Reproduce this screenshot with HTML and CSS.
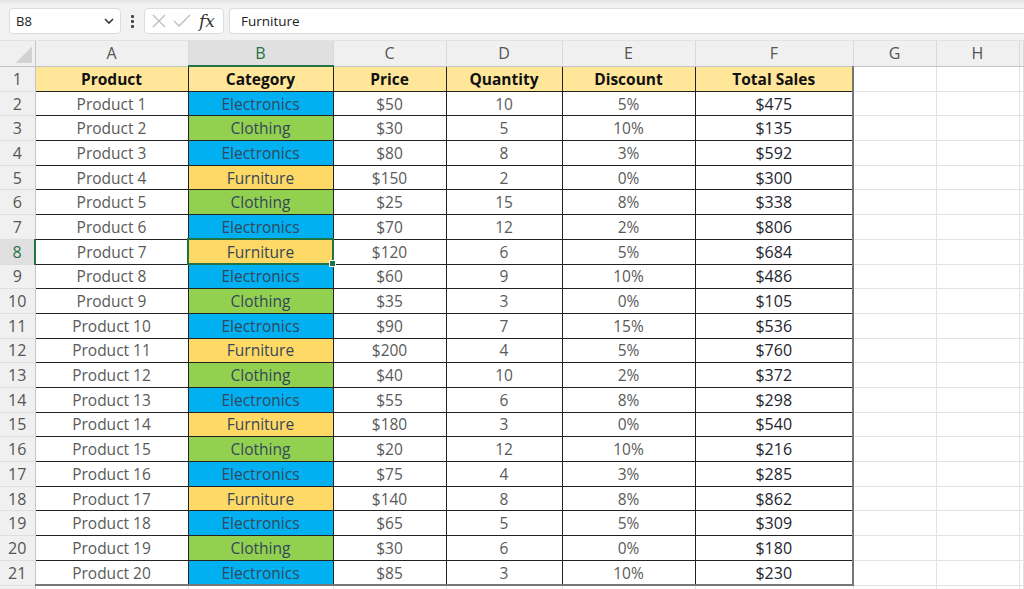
FILE: index.html
```html
<!DOCTYPE html>
<html>
<head>
  <meta charset="UTF-8">
  <meta name="viewport" content="width=device-width, initial-scale=1.0">
  <link rel="stylesheet" href="styles.css">
</head>
<body>
  <div class="formula-bar">
    <div class="name-box">
      <span>B8</span>
      <svg class="chevron" width="10" height="6" viewBox="0 0 10 6"><path d="M1 1l4 4 4-4" fill="none" stroke="#333" stroke-width="1.6"/></svg>
    </div>
    <div class="dots"><i></i><i></i><i></i></div>
    <div class="fx-box">
      <svg width="16" height="16" viewBox="0 0 16 16"><path d="M2 2l12 12M14 2L2 14" stroke="#bdbdbd" stroke-width="1.3" fill="none"/></svg>
      <svg width="18" height="16" viewBox="0 0 18 16"><path d="M1 8l5 5L17 2" stroke="#bdbdbd" stroke-width="1.3" fill="none"/></svg>
      <span class="fx">fx</span>
    </div>
    <div class="formula-input">Furniture</div>
  </div>

  <table class="sheet">
    <colgroup>
      <col style="width:35px">
      <col style="width:153px">
      <col style="width:145px">
      <col style="width:113px">
      <col style="width:116px">
      <col style="width:133px">
      <col style="width:158px">
      <col style="width:83px">
      <col style="width:83px">
      <col>
    </colgroup>
    <thead>
      <tr>
        <th class="corner"><span class="tri"></span></th>
        <th>A</th><th class="active">B</th><th>C</th><th>D</th><th>E</th><th>F</th><th>G</th><th>H</th><th></th>
      </tr>
    </thead>
    <tbody id="rows">
      <tr>
        <td class="rh">1</td>
        <td class="hd">Product</td><td class="hd">Category</td><td class="hd">Price</td><td class="hd">Quantity</td><td class="hd">Discount</td><td class="hd last">Total Sales</td>
        <td class="empty"></td><td class="empty"></td><td class="empty"></td>
      </tr>
    </tbody>
  </table>

  <script>
    const data = [
      ['Electronics', 50, 10, 5, 475],
      ['Clothing', 30, 5, 10, 135],
      ['Electronics', 80, 8, 3, 592],
      ['Furniture', 150, 2, 0, 300],
      ['Clothing', 25, 15, 8, 338],
      ['Electronics', 70, 12, 2, 806],
      ['Furniture', 120, 6, 5, 684],
      ['Electronics', 60, 9, 10, 486],
      ['Clothing', 35, 3, 0, 105],
      ['Electronics', 90, 7, 15, 536],
      ['Furniture', 200, 4, 5, 760],
      ['Clothing', 40, 10, 2, 372],
      ['Electronics', 55, 6, 8, 298],
      ['Furniture', 180, 3, 0, 540],
      ['Clothing', 20, 12, 10, 216],
      ['Electronics', 75, 4, 3, 285],
      ['Furniture', 140, 8, 8, 862],
      ['Electronics', 65, 5, 5, 309],
      ['Clothing', 30, 6, 0, 180],
      ['Electronics', 85, 3, 10, 230]
    ];

    const tbody = document.getElementById('rows');
    data.forEach((d, i) => {
      const n = i + 2;
      const tr = document.createElement('tr');
      if (n === 21) tr.className = 'bottom';
      const sel = n === 8;
      tr.innerHTML =
        `<td class="rh${sel ? ' active' : ''}">${n}</td>` +
        `<td class="cell">Product ${i + 1}</td>` +
        `<td class="cell cat ${d[0].toLowerCase()}${sel ? ' selected' : ''}">${d[0]}</td>` +
        `<td class="cell">$${d[1]}</td>` +
        `<td class="cell">${d[2]}</td>` +
        `<td class="cell">${d[3]}%</td>` +
        `<td class="cell total last">$${d[4]}</td>` +
        `<td class="empty"></td><td class="empty"></td><td class="empty"></td>`;
      tbody.appendChild(tr);
    });
    // one more blank grid row below the data
    const tail = document.createElement('tr');
    tail.innerHTML = '<td class="rh"></td>' + '<td class="empty"></td>'.repeat(9);
    tbody.appendChild(tail);
  </script>
</body>
</html>
```

FILE: styles.css
```css
body {
  margin: 0;
  font-family: "Open Sans", sans-serif;
  background: #ffffff;
  overflow: hidden;
}
.formula-bar {
  height: 41px;
  box-sizing: border-box;
  display: flex;
  align-items: flex-start;
  padding: 8px 0 0 9px;
  background: linear-gradient(#e4e4e4 0, #f2f2f2 5px, #f2f2f2 100%);
  border-bottom: 1px solid #e2e2e2;
}
.name-box, .fx-box, .formula-input {
  height: 26px;
  box-sizing: border-box;
  background: #ffffff;
  border: 1px solid #dcdcdc;
  border-radius: 4px;
  display: flex;
  align-items: center;
}
.name-box {
  width: 112px;
  padding: 0 6px 0 6px;
  justify-content: space-between;
  font-size: 13px;
  color: #222;
}
.dots {
  width: 23px;
  height: 26px;
  display: flex;
  flex-direction: column;
  align-items: center;
  justify-content: center;
  gap: 2px;
}
.dots i {
  width: 3px;
  height: 3px;
  background: #444;
  border-radius: 1px;
}
.fx-box {
  width: 80px;
  padding: 0 4px 0 6px;
  gap: 6px;
}
.fx {
  font-family: "DejaVu Serif", serif;
  font-style: italic;
  font-size: 17px;
  color: #333;
  margin-left: 2px;
}
.formula-input {
  flex: 1;
  margin-left: 5px;
  padding-left: 11px;
  border-right: none;
  border-radius: 4px 0 0 4px;
  font-size: 13.5px;
  color: #222;
}

.sheet {
  table-layout: fixed;
  border-collapse: collapse;
  width: 1024px;
}
.sheet th {
  height: 24px;
  padding: 0;
  background: #f0f0f0;
  font-weight: normal;
  font-size: 16px;
  color: #555;
  border-right: 1px solid #d9d9d9;
  border-bottom: 1px solid #c4c4c4;
  line-height: 20px;
}
.sheet th.active {
  background: #e0e0e0;
  color: #217346;
  border-bottom: 2px solid #217346;
}
.sheet .corner {
  position: relative;
  border-right: 1px solid #c4c4c4;
}
.tri {
  position: absolute;
  right: 3px;
  bottom: 3px;
  width: 17px;
  height: 17px;
  background: linear-gradient(to bottom right, transparent 50%, #d2d2d2 50%);
}
.sheet td {
  height: 23.7px;
  padding: 0;
  text-align: center;
  font-size: 15.5px;
  line-height: 20px;
  white-space: nowrap;
}
.sheet td.rh {
  background: #f0f0f0;
  color: #555;
  font-size: 16px;
  border-right: 1px solid #c4c4c4;
  border-bottom: 1px solid #dedede;
}
.sheet td.rh.active {
  background: #e0e0e0;
  color: #217346;
  border-right: 2px solid #217346;
}
.sheet td.hd {
  background: #ffe699;
  font-weight: bold;
  color: #111;
  border: 1px solid #222;
}
.sheet td.cell {
  color: #5a5a5a;
  border: 1px solid #222;
}
.sheet td.cat {
  color: #34475a;
}
.electronics { background: #00b0f0; }
.clothing { background: #92d050; }
.furniture { background: #ffd966; }
.sheet td.total {
  color: #1e2530;
  font-size: 16px;
}
.sheet td.last {
  border-right: 2px solid #767676;
}
.sheet tr.bottom td.cell {
  border-bottom: 2px solid #767676;
}
.sheet td.empty {
  border-right: 1px solid #e2e2e2;
  border-bottom: 1px solid #e2e2e2;
}
.sheet td.selected {
  position: relative;
  outline: 2px solid #217346;
  outline-offset: -1px;
}
.sheet td.selected::after {
  content: "";
  position: absolute;
  right: -3px;
  bottom: -3px;
  width: 5px;
  height: 5px;
  background: #217346;
  border: 1px solid #ffffff;
}
```
